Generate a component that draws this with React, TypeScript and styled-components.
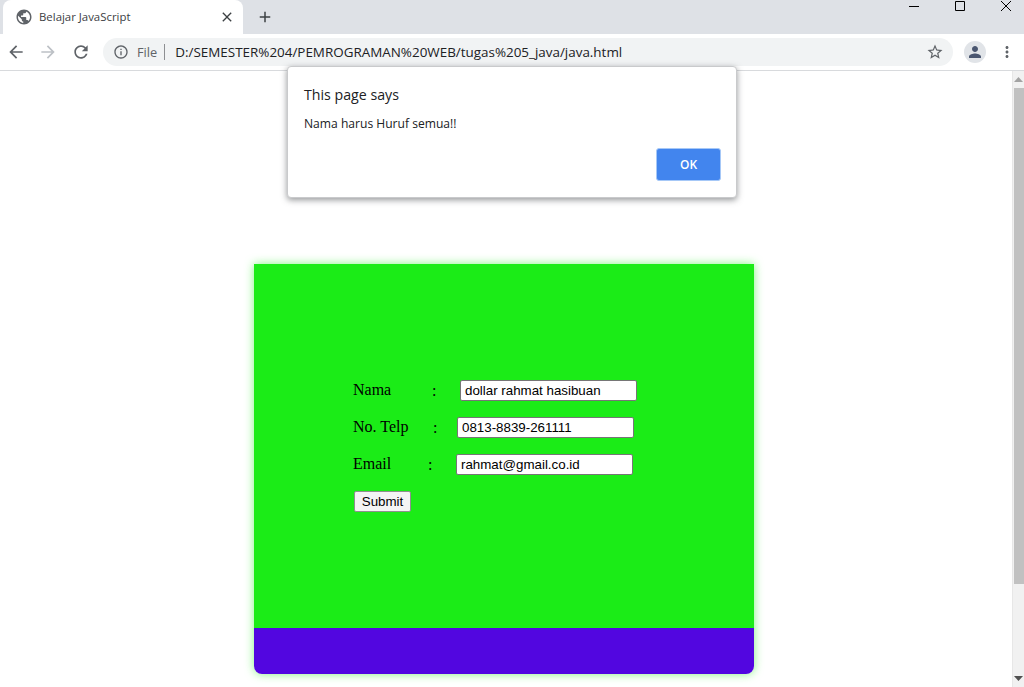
import React from 'react'
import styled, { createGlobalStyle } from 'styled-components'

const GlobalStyle = createGlobalStyle`
    html, body {
        margin: 0;
        padding: 0;
        height: 100%;
        overflow: hidden;
        background: #fff;
    }
`;

const Browser = styled.div`
    position: relative;
    display: flex;
    flex-direction: column;
    width: 1024px;
    height: 687px;
    overflow: hidden;
    font-family: "Open Sans", "Noto Sans", sans-serif;
`;

const TabStrip = styled.div`
    display: flex;
    align-items: flex-start;
    height: 34px;
    flex: none;
    background: #dee1e6;
`;

const Tab = styled.div`
    display: flex;
    align-items: center;
    box-sizing: border-box;
    width: 240px;
    height: 34px;
    margin-left: 3px;
    padding: 0 8px 0 12px;
    background: #fff;
    border-radius: 8px 8px 0 0;
`;

const TabTitle = styled.span`
    flex: 1;
    margin-left: 6px;
    margin-top: -1px;
    font-size: 11.4px;
    color: #3c4043;
`;

const NewTab = styled.div`
    display: flex;
    margin: 8px 0 0 13px;
`;

const WindowControls = styled.div`
    display: flex;
    margin-left: auto;
    padding-right: 12px;
    gap: 34px;
`;

const Toolbar = styled.div`
    display: flex;
    align-items: center;
    flex: none;
    box-sizing: border-box;
    height: 37px;
    padding: 0 7px 1px 6px;
    background: #fff;
    border-bottom: 1px solid #d8dadd;
`;

const NavButton = styled.div<{ $gap?: number }>`
    display: flex;
    margin-left: ${p => p.$gap ?? 0}px;
`;

const Omnibox = styled.div`
    display: flex;
    align-items: center;
    box-sizing: border-box;
    width: 850px;
    height: 28px;
    margin-left: 12px;
    padding: 0 9px 0 10px;
    border-radius: 14px;
    background: #f1f3f4;
`;

const Scheme = styled.span`
    margin-left: 8px;
    padding-right: 7px;
    border-right: 1px solid #8d8f92;
    line-height: 16px;
    color: #5f6368;
    font-size: 12.8px;
`;

const Url = styled.span`
    flex: 1;
    margin-left: 10px;
    color: #202124;
    font-size: 13.43px;
`;

const Avatar = styled.div`
    display: flex;
    align-items: center;
    justify-content: center;
    width: 22px;
    height: 22px;
    margin-left: 11px;
    border-radius: 50%;
    background: #e1e4e8;
`;

const Viewport = styled.div`
    display: flex;
    flex: 1;
    min-height: 0;
`;

const Page = styled.div`
    flex: 1;
    padding: 193px 0 0 254px;
`;

const Card = styled.div`
    display: flex;
    flex-direction: column;
    width: 500px;
    height: 410px;
    border-radius: 0 0 8px 8px;
    overflow: hidden;
    box-shadow: 0 0 10px rgba(27, 236, 23, 0.55);
`;

const CardBody = styled.form`
    display: flex;
    flex-direction: column;
    flex: 1;
    box-sizing: border-box;
    padding: 116px 0 0 99px;
    gap: 16px;
    background: #1bec17;
`;

const CardFooter = styled.div`
    height: 46px;
    flex: none;
    background: #5206e0;
`;

const Row = styled.div`
    display: flex;
    align-items: center;
    height: 21px;
    font-family: "Liberation Serif", serif;
    font-size: 16px;
    color: #000;
`;

const Label = styled.label<{ $width: number }>`
    width: ${p => p.$width}px;
    padding-bottom: 2px;
`;

const Colon = styled.span<{ $width: number }>`
    width: ${p => p.$width}px;
`;

const TextInput = styled.input`
    box-sizing: border-box;
    width: 177px;
    height: 21px;
    padding: 1px 4px;
    border: 1px solid #767676;
    border-radius: 2px;
    background: #fff;
    font-family: "Liberation Sans", sans-serif;
    font-size: 13.33px;
    color: #000;
    outline: none;
`;

const SubmitButton = styled.button`
    box-sizing: border-box;
    width: 57px;
    height: 21px;
    margin-left: 1px;
    padding: 0;
    border: 1px solid #8f8f8f;
    border-radius: 2px;
    background: #f4f4f4;
    font-family: "Liberation Sans", sans-serif;
    font-size: 13.33px;
    color: #000;
`;

const ScrollBar = styled.div`
    display: flex;
    flex-direction: column;
    flex: none;
    box-sizing: border-box;
    width: 12px;
    background: #f1f1f1;
    border-left: 1px solid #e7e7e7;
`;

const ScrollArrow = styled.div`
    display: flex;
    align-items: center;
    justify-content: center;
    height: 17px;
    flex: none;
`;

const ScrollThumb = styled.div`
    height: 496px;
    flex: none;
    margin-left: 1px;
    background: #c1c1c1;
`;

const ScrollTrack = styled.div`
    flex: 1;
`;

const Dialog = styled.div`
    position: absolute;
    top: 66px;
    left: 287px;
    box-sizing: border-box;
    width: 450px;
    height: 132px;
    padding: 19px 16px 0;
    background: #fff;
    border: 1px solid #c9cacc;
    border-radius: 4px;
    box-shadow: 0 2px 6px rgba(60, 64, 67, 0.55);
`;

const DialogTitle = styled.div`
    font-size: 14.2px;
    line-height: 18px;
    color: #202124;
`;

const DialogMessage = styled.div`
    margin-top: 12px;
    font-size: 12.1px;
    line-height: 16px;
    color: #202124;
`;

const DialogActions = styled.div`
    display: flex;
    justify-content: flex-end;
    margin: 16px -1px 0 0;
`;

const OkButton = styled.button`
    width: 65px;
    height: 33px;
    padding: 0;
    border: 1px solid #a6c8f7;
    border-radius: 3px;
    background: #4285ee;
    font-family: inherit;
    font-size: 12px;
    font-weight: 600;
    color: #fff;
`;

const Icon: React.FC<{ d: string; size?: number; color: string }> = ({ d, size = 20, color }) => (
    <svg width={size} height={size} viewBox="0 0 24 24" fill={color}>
        <path d={d} />
    </svg>
);

const globe = 'M12 2C6.48 2 2 6.48 2 12s4.48 10 10 10 10-4.48 10-10S17.52 2 12 2zm-1 17.93c-3.95-.49-7-3.85-7-7.93 0-.62.08-1.21.21-1.79L9 15v1c0 1.1.9 2 2 2v1.93zm6.9-2.54c-.26-.81-1-1.39-1.9-1.39h-1v-3c0-.55-.45-1-1-1H8v-2h2c.55 0 1-.45 1-1V7h2c1.1 0 2-.9 2-2v-.41c2.93 1.19 5 4.06 5 7.41 0 2.08-.8 3.97-2.1 5.39z';
const close = 'M19 6.41L17.59 5 12 10.59 6.41 5 5 6.41 10.59 12 5 17.59 6.41 19 12 13.41 17.59 19 19 17.59 13.41 12z';
const plus = 'M19 13h-6v6h-2v-6H5v-2h6V5h2v6h6v2z';
const back = 'M20 11H7.83l5.59-5.59L12 4l-8 8 8 8 1.41-1.41L7.83 13H20v-2z';
const forward = 'M12 4l-1.41 1.41L16.17 11H4v2h12.17l-5.58 5.59L12 20l8-8z';
const reload = 'M17.65 6.35C16.2 4.9 14.21 4 12 4c-4.42 0-7.99 3.58-7.99 8s3.57 8 7.99 8c3.73 0 6.84-2.55 7.73-6h-2.08c-.82 2.33-3.04 4-5.65 4-3.31 0-6-2.69-6-6s2.69-6 6-6c1.66 0 3.14.69 4.22 1.78L13 11h7V4l-2.35 2.35z';
const info = 'M11 7h2v2h-2zm0 4h2v6h-2zm1-9C6.48 2 2 6.48 2 12s4.48 10 10 10 10-4.48 10-10S17.52 2 12 2zm0 18c-4.41 0-8-3.59-8-8s3.59-8 8-8 8 3.59 8 8-3.59 8-8 8z';
const star = 'M22 9.24l-7.19-.62L12 2 9.19 8.63 2 9.24l5.46 4.73L5.82 21 12 17.27 18.18 21l-1.63-7.03L22 9.24zM12 15.4l-3.76 2.27 1-4.28-3.32-2.88 4.38-.38L12 6.1l1.71 4.04 4.38.38-3.32 2.88 1 4.28L12 15.4z';
const person = 'M12 12c2.21 0 4-1.79 4-4s-1.79-4-4-4-4 1.79-4 4 1.79 4 4 4zm0 2c-2.67 0-8 1.34-8 4v2h16v-2c0-2.66-5.33-4-8-4z';
const dots = 'M12 8c1.1 0 2-.9 2-2s-.9-2-2-2-2 .9-2 2 .9 2 2 2zm0 2c-1.1 0-2 .9-2 2s.9 2 2 2 2-.9 2-2-.9-2-2-2zm0 6c-1.1 0-2 .9-2 2s.9 2 2 2 2-.9 2-2-.9-2-2-2z';

const App: React.FC = () => {
    return (
        <Browser>
            <GlobalStyle />
            <TabStrip>
                <Tab>
                    <Icon d={globe} size={18} color="#5f6368" />
                    <TabTitle>Belajar JavaScript</TabTitle>
                    <Icon d={close} size={16} color="#3c4043" />
                </Tab>
                <NewTab>
                    <Icon d={plus} size={18} color="#3c4043" />
                </NewTab>
                <WindowControls>
                    <svg width="12" height="12" viewBox="0 0 12 12">
                        <path d="M1 6.5h10" stroke="#000" fill="none" />
                    </svg>
                    <svg width="12" height="12" viewBox="0 0 12 12">
                        <path d="M1.5 1.5h9v9h-9z" stroke="#000" fill="none" />
                    </svg>
                    <svg width="12" height="12" viewBox="0 0 12 12">
                        <path d="M1 1l10 10M11 1L1 11" stroke="#000" fill="none" />
                    </svg>
                </WindowControls>
            </TabStrip>
            <Toolbar>
                <NavButton><Icon d={back} color="#5f6368" /></NavButton>
                <NavButton $gap={12}><Icon d={forward} color="#bdc1c6" /></NavButton>
                <NavButton $gap={13}><Icon d={reload} color="#5f6368" /></NavButton>
                <Omnibox>
                    <Icon d={info} size={16} color="#5f6368" />
                    <Scheme>File</Scheme>
                    <Url>D:/SEMESTER%204/PEMROGRAMAN%20WEB/tugas%205_java/java.html</Url>
                    <Icon d={star} size={18} color="#5f6368" />
                </Omnibox>
                <Avatar>
                    <Icon d={person} size={18} color="#4a5670" />
                </Avatar>
                <NavButton $gap={12}><Icon d={dots} size={18} color="#5f6368" /></NavButton>
            </Toolbar>
            <Viewport>
                <Page>
                    <Card>
                        <CardBody>
                            <Row>
                                <Label $width={79}>Nama</Label>
                                <Colon $width={28}>:</Colon>
                                <TextInput defaultValue="dollar rahmat hasibuan" />
                            </Row>
                            <Row>
                                <Label $width={80}>No. Telp</Label>
                                <Colon $width={24}>:</Colon>
                                <TextInput defaultValue="0813-8839-261111" />
                            </Row>
                            <Row>
                                <Label $width={75}>Email</Label>
                                <Colon $width={28}>:</Colon>
                                <TextInput defaultValue="rahmat@gmail.co.id" />
                            </Row>
                            <Row>
                                <SubmitButton type="button">Submit</SubmitButton>
                            </Row>
                        </CardBody>
                        <CardFooter />
                    </Card>
                </Page>
                <ScrollBar>
                    <ScrollArrow>
                        <svg width="9" height="5" viewBox="0 0 9 5"><path d="M4.5 0L9 5H0z" fill="#a3a3a3" /></svg>
                    </ScrollArrow>
                    <ScrollThumb />
                    <ScrollTrack />
                    <ScrollArrow>
                        <svg width="9" height="5" viewBox="0 0 9 5"><path d="M0 0h9L4.5 5z" fill="#505050" /></svg>
                    </ScrollArrow>
                </ScrollBar>
            </Viewport>
            <Dialog>
                <DialogTitle>This page says</DialogTitle>
                <DialogMessage>Nama harus Huruf semua!!</DialogMessage>
                <DialogActions>
                    <OkButton type="button">OK</OkButton>
                </DialogActions>
            </Dialog>
        </Browser>
    );
};

export default App;
